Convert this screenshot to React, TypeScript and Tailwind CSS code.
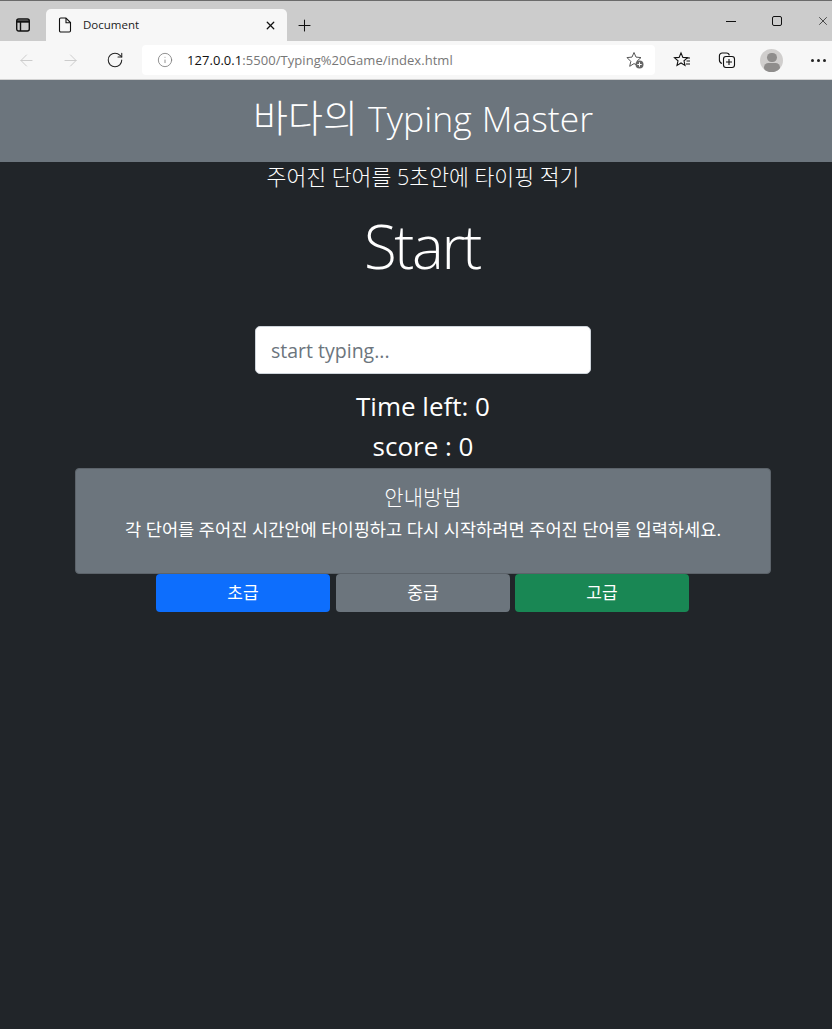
import { ArrowLeft, ArrowRight, Info, Plus, RotateCw, X } from 'lucide-react';

function BrowserChrome() {
  return (
    <div className="font-['Open_Sans','Noto_Sans',sans-serif]">
      {/* tab strip */}
      <div className="h-[41px] bg-[#cccccc] border-t border-[#6b6b6b] flex items-end">
        <div className="w-[46px] h-[32px] flex items-center justify-center">
          <svg width="16" height="16" viewBox="0 0 16 16" fill="none" stroke="#111" strokeWidth="1.4">
            <rect x="1.7" y="2" width="12.6" height="12" rx="2" />
            <path d="M2 4.5h12" strokeWidth="2.4" />
            <path d="M5.5 5v9" />
          </svg>
        </div>
        <div className="w-[241px] h-[32px] bg-[#f7f7f7] rounded-t-[5px] flex items-center pl-[12px] pr-[10px]">
          <svg width="14" height="16" viewBox="0 0 14 16" fill="none" stroke="#111" strokeWidth="1.1">
            <path d="M1.5 2.2a1.2 1.2 0 0 1 1.2-1.2h5.2l4.6 4.6v8.2a1.2 1.2 0 0 1-1.2 1.2H2.7a1.2 1.2 0 0 1-1.2-1.2z" />
            <path d="M8 1v4.7h4.5" />
          </svg>
          <span className="ml-[11px] text-[11.5px] text-[#222] flex-1">Document</span>
          <X size={13} color="#111" strokeWidth={2.4} />
        </div>
        <div className="w-[34px] h-[32px] flex items-center justify-center">
          <Plus size={19} color="#111" strokeWidth={1.3} />
        </div>
        <div className="flex-1 h-[40px] flex items-start justify-end self-start">
          <div className="w-[46px] h-[40px] flex items-center justify-center">
            <div className="w-[10px] h-px bg-[#111]" />
          </div>
          <div className="w-[46px] h-[40px] flex items-center justify-center">
            <div className="w-[10px] h-[10px] border border-[#111] rounded-[2px]" />
          </div>
          <div className="w-[46px] h-[40px] flex items-center justify-center">
            <X size={14} color="#111" strokeWidth={1.2} />
          </div>
        </div>
      </div>
      {/* address bar */}
      <div className="h-[39px] bg-[#f7f7f7] border-b border-[#d2d2d2] flex items-center">
        <div className="w-[142px] flex items-center shrink-0">
          <ArrowLeft size={19} color="#c9c9c9" strokeWidth={1.2} className="ml-[17px]" />
          <ArrowRight size={19} color="#c9c9c9" strokeWidth={1.2} className="ml-[25px]" />
          <RotateCw size={18} color="#222" strokeWidth={1.4} className="ml-[26px]" />
        </div>
        <div className="w-[513px] h-[30px] bg-white rounded-[4px] flex items-center shrink-0">
          <Info size={16} color="#777" strokeWidth={1.2} className="ml-[15px]" />
          <span className="ml-[14px] text-[13px] tracking-[0.004em] text-[#777] flex-1 pt-px">
            <span className="text-[#111]">127.0.0.1</span>:5500/Typing%20Game/index.html
          </span>
          <svg width="20" height="20" viewBox="0 0 20 20" className="mr-[10px]">
            <path d="M9 2.5l2 4.6 5 .5-3.8 3.3 1.1 4.9L9 13.6l-4.3 2.7 1.1-4.9L2 7.6l5-.5z" fill="none" stroke="#555" strokeWidth="1" />
            <circle cx="14.5" cy="14.5" r="4" fill="#666" />
            <path d="M14.5 12.3v4.4M12.3 14.5h4.4" stroke="#fff" strokeWidth="1" />
          </svg>
        </div>
        <div className="flex items-center">
          <svg width="20" height="20" viewBox="0 0 20 20" fill="none" stroke="#111" strokeWidth="1.1" className="ml-[18px]">
            <path d="M8 3l1.9 4.4 4.6.4-3.5 3 1 4.6L8 13l-4 2.4 1-4.6-3.5-3 4.6-.4z" />
            <path d="M13 8h4M13.5 11h3.5M13 14h4" />
          </svg>
          <svg width="20" height="20" viewBox="0 0 20 20" fill="none" stroke="#111" strokeWidth="1.1" className="ml-[24px]">
            <path d="M5 13.5c-1.5-.5-2.6-1.8-2.6-3.5V5.8A2.8 2.8 0 0 1 5.2 3h4.3c1.4 0 2.6 1 2.8 2.4" />
            <rect x="6.5" y="6.5" width="11" height="11" rx="2.5" fill="#f7f7f7" />
            <path d="M12 9v6M9 12h6" />
          </svg>
          <div className="ml-[23px] w-[23px] h-[23px] rounded-full bg-[#d0cecd] overflow-hidden flex flex-col items-center">
            <div className="mt-[4px] w-[10px] h-[10px] rounded-full bg-[#8f8d8c]" />
            <div className="mt-[1px] w-[16px] h-[10px] rounded-full bg-[#8f8d8c]" />
          </div>
          <div className="ml-[28px] flex gap-[3px]">
            <div className="w-[3px] h-[3px] rounded-full bg-[#222]" />
            <div className="w-[3px] h-[3px] rounded-full bg-[#222]" />
            <div className="w-[3px] h-[3px] rounded-full bg-[#222]" />
          </div>
        </div>
      </div>
    </div>
  );
}

export default function App() {
  return (
    <div className="w-[832px] h-[1029px] overflow-hidden bg-[#212529]">
      {/* the captured page is 846px wide, so it runs past the window edge */}
      <div className="w-[846px] h-full text-white font-['Open_Sans','Noto_Sans_CJK_KR',sans-serif]">
        <BrowserChrome />

        <header className="h-[82px] bg-[#6c757d] flex items-center justify-center pb-[6px]">
          <h1 className="text-[35.5px] leading-[43px] [word-spacing:1px] font-light whitespace-nowrap">
            <span className="text-[38px]">바다의</span> Typing Master
          </h1>
        </header>

        <div className="flex flex-col items-center">
          <p className="text-[21.6px] leading-[30px] font-light">주어진 단어를 5초안에 타이핑 적기</p>
          <h2 className="mt-[12px] pr-[2px] text-[60px] leading-[84px] tracking-[-2.4px] font-light">Start</h2>

          <input
            type="text"
            placeholder="start typing..."
            className="mt-[38px] w-[336px] h-[48px] pl-[15px] pr-4 bg-white border border-[#ced4da] rounded-[5px] text-[19.5px] text-[#212529] placeholder:text-[#6c757d] outline-none"
          />

          <p className="mt-[14px] text-[26px] leading-[36px]">Time left: 0</p>
          <p className="mt-[4px] text-[26px] leading-[36px]">score : 0</p>

          <div className="mt-[4px] w-[696px] h-[106px] bg-[#6c757d] border border-[#5c636a] rounded-[4px] flex flex-col items-center pt-[13px]">
            <h5 className="text-[21px] leading-[30px] font-light">안내방법</h5>
            <p className="mt-[5px] text-[17.6px] leading-[24px] whitespace-nowrap">각 단어를 주어진 시간안에 타이핑하고 다시 시작하려면 주어진 단어를 입력하세요.</p>
          </div>

          <div className="flex pr-[1px]">
            <button className="w-[174px] h-[38px] bg-[#0d6efd] rounded-[4px] text-[17px]">초급</button>
            <button className="ml-[6px] w-[174px] h-[38px] bg-[#6c757d] rounded-[4px] text-[17px]">중급</button>
            <button className="ml-[5px] w-[174px] h-[38px] bg-[#198754] rounded-[4px] text-[17px]">고급</button>
          </div>
        </div>
      </div>
    </div>
  );
}
